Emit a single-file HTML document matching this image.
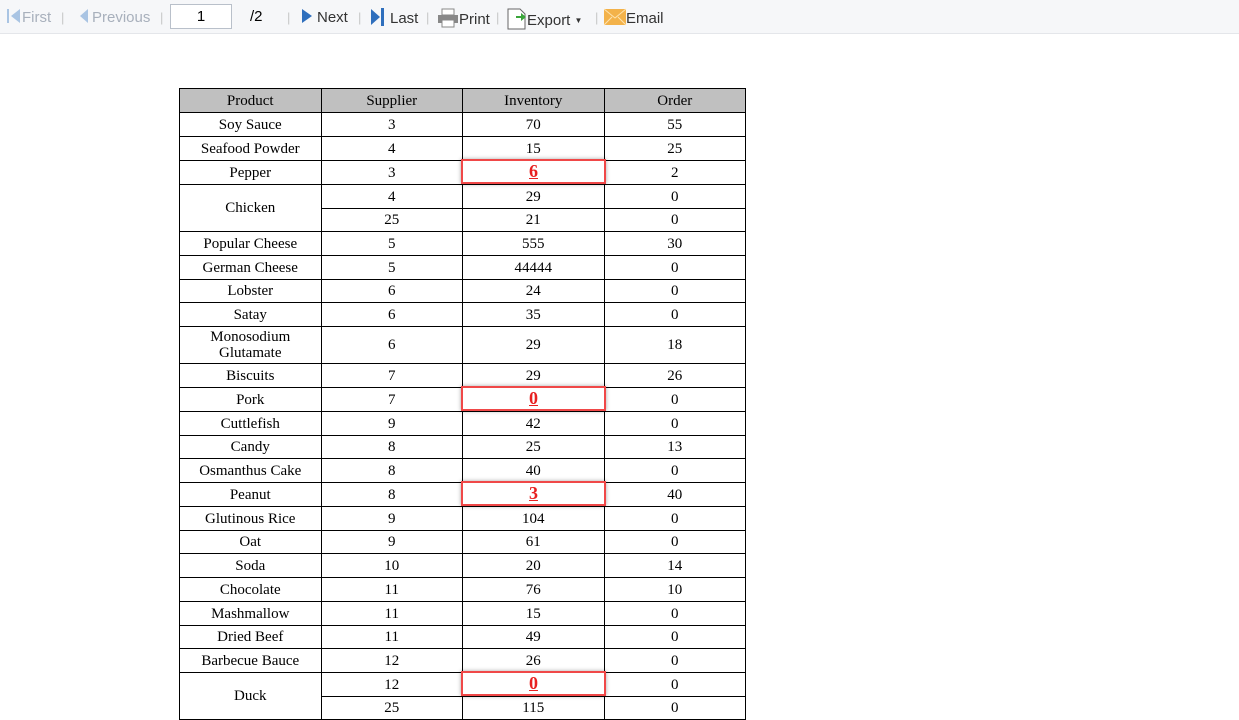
<!DOCTYPE html>
<html><head><meta charset="utf-8"><style>
body{margin:0;width:1239px;height:720px;overflow:hidden;background:#fff;position:relative;font-family:"Liberation Sans",sans-serif}
.tb{position:absolute;left:0;top:0;width:1239px;height:33px;background:#f6f7f9;border-bottom:1px solid #e4e6ea;font-size:15px;color:#333}
.tb span{position:absolute;top:8px;white-space:nowrap}
.g{color:#a8b0bc}
.sep{color:#c8c8c8;font-size:13px;top:10px!important}
.inp{position:absolute;left:170px;top:4px;width:60px;height:23px;border:1px solid #b9c0ca;background:#fff;text-align:center;line-height:23px;font-size:15px;color:#000}
table{position:absolute;left:179px;top:88px;width:567px;table-layout:fixed;border-collapse:collapse;font-family:"Liberation Serif",serif;font-size:15px;color:#000}
td{border:1px solid #000;text-align:center;padding:0;line-height:16px}
tr.h td{background:#c0c0c0}
.rb{position:absolute;left:461px;width:141px;height:21px;border:2px solid #f04848;box-shadow:0 0 4px rgba(0,0,0,.35);text-align:center;font-family:"Liberation Serif",serif;font-weight:bold;font-size:18px;color:#e82020;text-decoration:underline;line-height:21px}
</style></head><body>
<div class="tb">
<span class="g" style="left:6px"><svg width="16" height="16" style="vertical-align:-2px"><rect x="1" y="1" width="2" height="14" fill="#a9c4e3"/><path d="M14 1v14L5 8z" fill="#a9c4e3"/></svg>First</span>
<span class="sep" style="left:61px">|</span>
<span class="g" style="left:76px"><svg width="16" height="16" style="vertical-align:-2px"><path d="M12 1v14L4 8z" fill="#a9c4e3"/></svg>Previous</span>
<span class="sep" style="left:160px">|</span>
<div class="inp">1</div>
<span style="left:250px;color:#000">/2</span>
<span class="sep" style="left:287px">|</span>
<span style="left:299px"><svg width="18" height="16" style="vertical-align:-2px"><path d="M3 1v14l10-7z" fill="#2f6fbd"/></svg>Next</span>
<span class="sep" style="left:358px">|</span>
<span style="left:369px"><svg width="21" height="18" style="vertical-align:-3px"><path d="M2 1v16l9-8z" fill="#2f6fbd"/><rect x="12" y="0" width="3" height="18" fill="#2f6fbd"/></svg>Last</span>
<span class="sep" style="left:426px">|</span>
<span style="left:437px"><svg width="22" height="20" style="vertical-align:-4px"><rect x="5" y="1" width="12" height="6" fill="#fff" stroke="#888"/><rect x="1" y="7" width="20" height="8" fill="#888"/><rect x="5" y="12" width="12" height="7" fill="#fff" stroke="#888"/></svg>Print</span>
<span class="sep" style="left:496px">|</span>
<span style="left:507px"><svg width="20" height="22" style="vertical-align:-5px"><path d="M1 1h12l5 5v15H1z" fill="#fff" stroke="#666"/><path d="M9 8h5V5l5 4-5 4v-3H9z" fill="#3aa53a"/></svg>Export <span style="position:static;font-size:8px;vertical-align:2px">▼</span></span>
<span class="sep" style="left:595px">|</span>
<span style="left:604px"><svg width="22" height="18" style="vertical-align:-3px"><rect x="0" y="1" width="22" height="16" fill="#f3b24a"/><path d="M0 1l11 9L22 1M0 17l8-8M22 17l-8-8" stroke="#fde3b0" fill="none"/></svg>Email</span>
</div>
<table>
<tr class="h" style="height:24px"><td>Product</td><td>Supplier</td><td>Inventory</td><td>Order</td></tr>
<tr style="height:24px"><td>Soy Sauce</td><td>3</td><td>70</td><td>55</td></tr>
<tr style="height:24px"><td>Seafood Powder</td><td>4</td><td>15</td><td>25</td></tr>
<tr style="height:24px"><td>Pepper</td><td>3</td><td></td><td>2</td></tr>
<tr style="height:24px"><td rowspan="2">Chicken</td><td>4</td><td>29</td><td>0</td></tr>
<tr style="height:23px"><td>25</td><td>21</td><td>0</td></tr>
<tr style="height:24px"><td>Popular Cheese</td><td>5</td><td>555</td><td>30</td></tr>
<tr style="height:24px"><td>German Cheese</td><td>5</td><td>44444</td><td>0</td></tr>
<tr style="height:23px"><td>Lobster</td><td>6</td><td>24</td><td>0</td></tr>
<tr style="height:24px"><td>Satay</td><td>6</td><td>35</td><td>0</td></tr>
<tr style="height:37px"><td>Monosodium<br>Glutamate</td><td>6</td><td>29</td><td>18</td></tr>
<tr style="height:24px"><td>Biscuits</td><td>7</td><td>29</td><td>26</td></tr>
<tr style="height:24px"><td>Pork</td><td>7</td><td></td><td>0</td></tr>
<tr style="height:24px"><td>Cuttlefish</td><td>9</td><td>42</td><td>0</td></tr>
<tr style="height:23px"><td>Candy</td><td>8</td><td>25</td><td>13</td></tr>
<tr style="height:24px"><td>Osmanthus Cake</td><td>8</td><td>40</td><td>0</td></tr>
<tr style="height:24px"><td>Peanut</td><td>8</td><td></td><td>40</td></tr>
<tr style="height:24px"><td>Glutinous Rice</td><td>9</td><td>104</td><td>0</td></tr>
<tr style="height:23px"><td>Oat</td><td>9</td><td>61</td><td>0</td></tr>
<tr style="height:24px"><td>Soda</td><td>10</td><td>20</td><td>14</td></tr>
<tr style="height:24px"><td>Chocolate</td><td>11</td><td>76</td><td>10</td></tr>
<tr style="height:24px"><td>Mashmallow</td><td>11</td><td>15</td><td>0</td></tr>
<tr style="height:23px"><td>Dried Beef</td><td>11</td><td>49</td><td>0</td></tr>
<tr style="height:24px"><td>Barbecue Bauce</td><td>12</td><td>26</td><td>0</td></tr>
<tr style="height:24px"><td rowspan="2">Duck</td><td>12</td><td></td><td>0</td></tr>
<tr style="height:23px"><td>25</td><td>115</td><td>0</td></tr>
</table>
<div class="rb" style="top:159px">6</div>
<div class="rb" style="top:386px">0</div>
<div class="rb" style="top:481px">3</div>
<div class="rb" style="top:671px">0</div>
</body></html>
